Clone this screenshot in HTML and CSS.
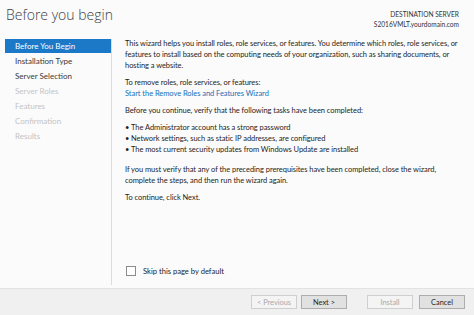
FILE: index.html
```html
<!DOCTYPE html>
<html lang="en">
<head>
    <meta charset="UTF-8">
    <title>Add Roles and Features Wizard</title>
    <link rel="stylesheet" href="styles.css">
</head>
<body>
<div class="wizard">
    <div class="header">
        <h1 class="title">Before you begin</h1>
        <div class="dest">
            <div>DESTINATION SERVER</div>
            <div>S2016VMLT.yourdomain.com</div>
        </div>
    </div>
    <div class="main">
        <ul class="steps">
            <li class="active">Before You Begin</li>
            <li>Installation Type</li>
            <li>Server Selection</li>
            <li class="off">Server Roles</li>
            <li class="off">Features</li>
            <li class="off">Confirmation</li>
            <li class="off">Results</li>
        </ul>
        <div class="content">
            <div class="text">
                <p>This wizard helps you install roles, role services, or features. You determine which roles, role services, or features to install based on the computing needs of your organization, such as sharing documents, or hosting a website.</p>
                <p>To remove roles, role services, or features:<br><a href="#">Start the Remove Roles and Features Wizard</a></p>
                <p>Before you continue, verify that the following tasks have been completed:</p>
                <ul class="bullets">
                    <li>The Administrator account has a strong password</li>
                    <li>Network settings, such as static IP addresses, are configured</li>
                    <li>The most current security updates from Windows Update are installed</li>
                </ul>
                <p>If you must verify that any of the preceding prerequisites have been completed, close the wizard, complete the steps, and then run the wizard again.</p>
                <p>To continue, click Next.</p>
            </div>
            <label class="skip"><span class="box"></span>Skip this page by default</label>
        </div>
    </div>
    <div class="footer">
        <button class="btn" disabled>&lt; Previous</button>
        <button class="btn primary">Next &gt;</button>
        <button class="btn gap" disabled>Install</button>
        <button class="btn">Cancel</button>
    </div>
</div>
</body>
</html>
```

FILE: styles.css
```css
body{
    margin:0px;
    font-family:Lato, "Open Sans", sans-serif;
    color:#1e1e1e;
}
.wizard{
    width:474px;
    height:315px;
    display:flex;
    flex-direction:column;
    background-color:#fbfbfb;
}
.header{
    display:flex;
    justify-content:space-between;
    height:35px;
    padding:0px 15px 0px 6px;
}
.title{
    margin:0px;
    padding-top:3px;
    font-family:"Open Sans", sans-serif;
    font-size:14px;
    font-weight:300;
    color:#3a4048;
    line-height:24px;
}
.dest{
    padding-top:9px;
    font-size:6.6px;
    line-height:10px;
    text-align:right;
    color:#333;
}
.main{
    flex:1;
    display:flex;
}
.steps{
    list-style:none;
    margin:4px 0px 0px 5px;
    padding:0px;
    width:106px;
    height:246px;
    border-right:1px solid #dcdcdc;
    font-size:8px;
}
.steps li{
    height:15px;
    line-height:15px;
    padding-left:10px;
    color:#3a3a3a;
}
.steps li.active{
    height:14px;
    line-height:14px;
    margin-bottom:1px;
    background-color:#1b79c8;
    color:#ffffff;
}
.steps li.off{
    color:#c4c4c4;
}
.content{
    flex:1;
    display:flex;
    flex-direction:column;
    padding:3px 11px 0px 13px;
}
.text{
    flex:1;
    font-size:7.5px;
    letter-spacing:-0.05px;
    line-height:11px;
}
.text p{
    margin:0px 0px 6px 0px;
}
.text a{
    color:#1a6fb5;
    text-decoration:none;
}
.bullets{
    margin:0px 0px 9px 0px;
    padding:0px;
    list-style:none;
}
.bullets li::before{
    content:"\2022";
    display:inline-block;
    width:6px;
}
.skip{
    display:flex;
    align-items:center;
    font-size:7.6px;
    height:12px;
    margin-bottom:11px;
    margin-left:1px;
}
.box{
    width:8px;
    height:8px;
    border:1px solid #8a8a8a;
    background-color:#fff;
    margin-right:7px;
}
.footer{
    height:26px;
    border-top:1px solid #e2e2e2;
    background-color:#f0f0f0;
    display:flex;
    justify-content:flex-end;
    align-items:center;
    padding-right:9px;
}
.btn{
    width:46px;
    height:14px;
    margin-left:4px;
    padding:0px;
    font-family:inherit;
    font-size:7.4px;
    color:#1e1e1e;
    background-color:#e1e1e1;
    border:1px solid #adadad;
}
.btn:disabled{
    background-color:#f4f4f4;
    border-color:#cfcfcf;
    color:#a8a8a8;
}
.btn.gap{
    margin-left:20px;
}
.btn.gap + .btn{
    margin-left:6px;
}
```
